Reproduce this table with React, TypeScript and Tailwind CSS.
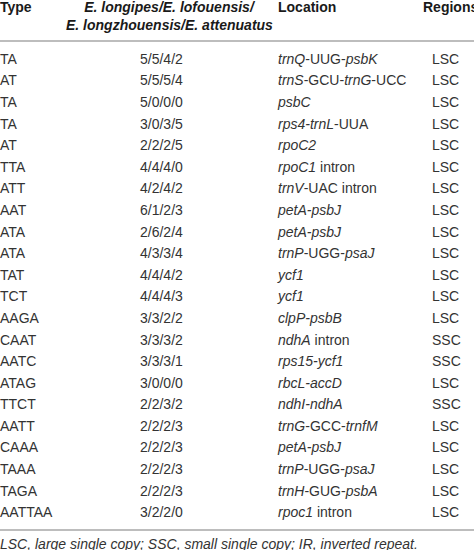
const rows: { type: string; counts: string; loc: React.ReactNode; region: string }[] = [
  { type: 'TA', counts: '5/5/4/2', loc: <><i>trnQ</i>-UUG-<i>psbK</i></>, region: 'LSC' },
  { type: 'AT', counts: '5/5/5/4', loc: <><i>trnS</i>-GCU-<i>trnG</i>-UCC</>, region: 'LSC' },
  { type: 'TA', counts: '5/0/0/0', loc: <i>psbC</i>, region: 'LSC' },
  { type: 'TA', counts: '3/0/3/5', loc: <><i>rps4-trnL</i>-UUA</>, region: 'LSC' },
  { type: 'AT', counts: '2/2/2/5', loc: <i>rpoC2</i>, region: 'LSC' },
  { type: 'TTA', counts: '4/4/4/0', loc: <><i>rpoC1</i> intron</>, region: 'LSC' },
  { type: 'ATT', counts: '4/2/4/2', loc: <><i>trnV</i>-UAC intron</>, region: 'LSC' },
  { type: 'AAT', counts: '6/1/2/3', loc: <i>petA-psbJ</i>, region: 'LSC' },
  { type: 'ATA', counts: '2/6/2/4', loc: <i>petA-psbJ</i>, region: 'LSC' },
  { type: 'ATA', counts: '4/3/3/4', loc: <><i>trnP</i>-UGG-<i>psaJ</i></>, region: 'LSC' },
  { type: 'TAT', counts: '4/4/4/2', loc: <i>ycf1</i>, region: 'LSC' },
  { type: 'TCT', counts: '4/4/4/3', loc: <i>ycf1</i>, region: 'LSC' },
  { type: 'AAGA', counts: '3/3/2/2', loc: <i>clpP-psbB</i>, region: 'LSC' },
  { type: 'CAAT', counts: '3/3/3/2', loc: <><i>ndhA</i> intron</>, region: 'SSC' },
  { type: 'AATC', counts: '3/3/3/1', loc: <i>rps15-ycf1</i>, region: 'SSC' },
  { type: 'ATAG', counts: '3/0/0/0', loc: <i>rbcL-accD</i>, region: 'LSC' },
  { type: 'TTCT', counts: '2/2/3/2', loc: <i>ndhI-ndhA</i>, region: 'SSC' },
  { type: 'AATT', counts: '2/2/2/3', loc: <><i>trnG</i>-GCC-<i>trnfM</i></>, region: 'LSC' },
  { type: 'CAAA', counts: '2/2/2/3', loc: <i>petA-psbJ</i>, region: 'LSC' },
  { type: 'TAAA', counts: '2/2/2/3', loc: <><i>trnP</i>-UGG-<i>psaJ</i></>, region: 'LSC' },
  { type: 'TAGA', counts: '2/2/2/3', loc: <><i>trnH</i>-GUG-<i>psbA</i></>, region: 'LSC' },
  { type: 'AATTAA', counts: '3/2/2/0', loc: <><i>rpoc1</i> intron</>, region: 'LSC' },
];

export default function App() {
  return (
    <div className="w-[474px] h-[550px] overflow-hidden bg-white text-[#333] font-['Liberation_Sans',Arial,sans-serif] text-[14px]">
      {/* header */}
      <div className="flex font-bold text-[#1a1a1a] leading-[18px] -mt-[2px] h-[42px]">
        <div className="w-[66px] shrink-0">Type</div>
        <div className="w-[206px] shrink-0 text-center italic whitespace-nowrap">
          E. longipes/E. lofouensis/
          <br />
          E. longzhouensis/E. attenuatus
        </div>
        <div className="w-[151px] shrink-0 pl-[6px]">Location</div>
        <div className="whitespace-nowrap">Regions</div>
      </div>
      <div className="h-[1.5px] bg-[#bdbdbd]" />

      <div className="pt-[6.5px]">
        {rows.map((r, i) => (
          <div key={i} className="grid grid-cols-[140px_138px_154px_1fr] h-[21.6px] items-center leading-none">
            <div>{r.type}</div>
            <div>{r.counts}</div>
            <div className="whitespace-nowrap">{r.loc}</div>
            <div>{r.region}</div>
          </div>
        ))}
      </div>

      <div className="mt-[6px] h-[1.5px] bg-[#bdbdbd]" />
      <div className="italic text-[14px] leading-[26px] whitespace-nowrap">
        LSC, large single copy; SSC, small single copy; IR, inverted repeat.
      </div>
    </div>
  );
}
